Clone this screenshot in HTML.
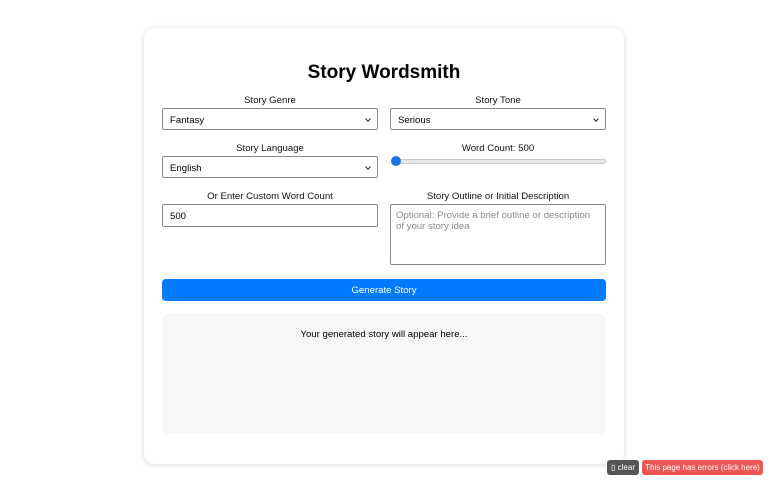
<!DOCTYPE html>
<html><head><meta charset="utf-8"><style>
*{box-sizing:border-box}
body{margin:0;width:768px;height:480px;background:#fff;font-family:"Liberation Sans",Arial,sans-serif;position:relative;overflow:hidden}
.card{position:absolute;left:144px;top:28px;width:480px;height:436px;background:#fff;border-radius:10px;box-shadow:0 1px 6px rgba(0,0,0,.15)}
.a{position:absolute}
h1{position:absolute;left:0;width:480px;top:62px;margin:0;text-align:center;font-size:19px;font-weight:bold;color:#000}
.lbl{position:absolute;font-size:9.6px;color:#111;text-align:center;width:216px}
.box{position:absolute;width:216px;border:1px solid #8a8a8a;border-radius:2px;background:#fff;font-size:9.6px;color:#000;padding-left:7px}
.sel{height:22px;line-height:23px}
.sel:after{content:"";position:absolute;right:7px;top:8px;width:3px;height:3px;border-right:1.5px solid #222;border-bottom:1.5px solid #222;transform:rotate(45deg)}
</style></head><body>
<div class="card"></div>
<h1 style="left:144px">Story Wordsmith</h1>
<div class="lbl" style="left:162px;top:95px">Story Genre</div>
<div class="lbl" style="left:390px;top:95px">Story Tone</div>
<div class="box sel" style="left:162px;top:108px">Fantasy</div>
<div class="box sel" style="left:390px;top:108px">Serious</div>
<div class="lbl" style="left:162px;top:143px">Story Language</div>
<div class="lbl" style="left:390px;top:143px">Word Count: 500</div>
<div class="box sel" style="left:162px;top:156px">English</div>
<div class="a" style="left:392px;top:159px;width:214px;height:5px;background:#e6e6e6;border:1px solid #ccc;border-radius:3px"></div>
<div class="a" style="left:391px;top:156px;width:10px;height:10px;border-radius:50%;background:#1a73e8"></div>
<div class="lbl" style="left:162px;top:191px">Or Enter Custom Word Count</div>
<div class="lbl" style="left:390px;top:191px">Story Outline or Initial Description</div>
<div class="box" style="left:162px;top:204px;height:23px;line-height:23px">500</div>
<div class="box" style="left:390px;top:204px;height:61px;padding:5px 5px;line-height:11px;color:#8a8a8a">Optional: Provide a brief outline or description of your story idea</div>
<div class="a" style="left:162px;top:279px;width:444px;height:22px;background:#007bff;border-radius:4px;color:#fff;font-size:9.6px;text-align:center;line-height:24px">Generate Story</div>
<div class="a" style="left:162px;top:314px;width:444px;height:120px;background:#f7f7f7;border-radius:6px;font-size:9.6px;text-align:center;padding-top:15px;color:#000">Your generated story will appear here...</div>
<div class="a" style="left:607px;top:460px;width:32px;height:15px;background:#555;border-radius:3px;color:#fff;font-size:8px;line-height:15px;text-align:center">▯ clear</div>
<div class="a" style="left:642px;top:460px;width:121px;height:15px;background:#e55;border-radius:3px;color:#fff;font-size:8px;line-height:15px;text-align:center">This page has errors (click here)</div>
</body></html>
